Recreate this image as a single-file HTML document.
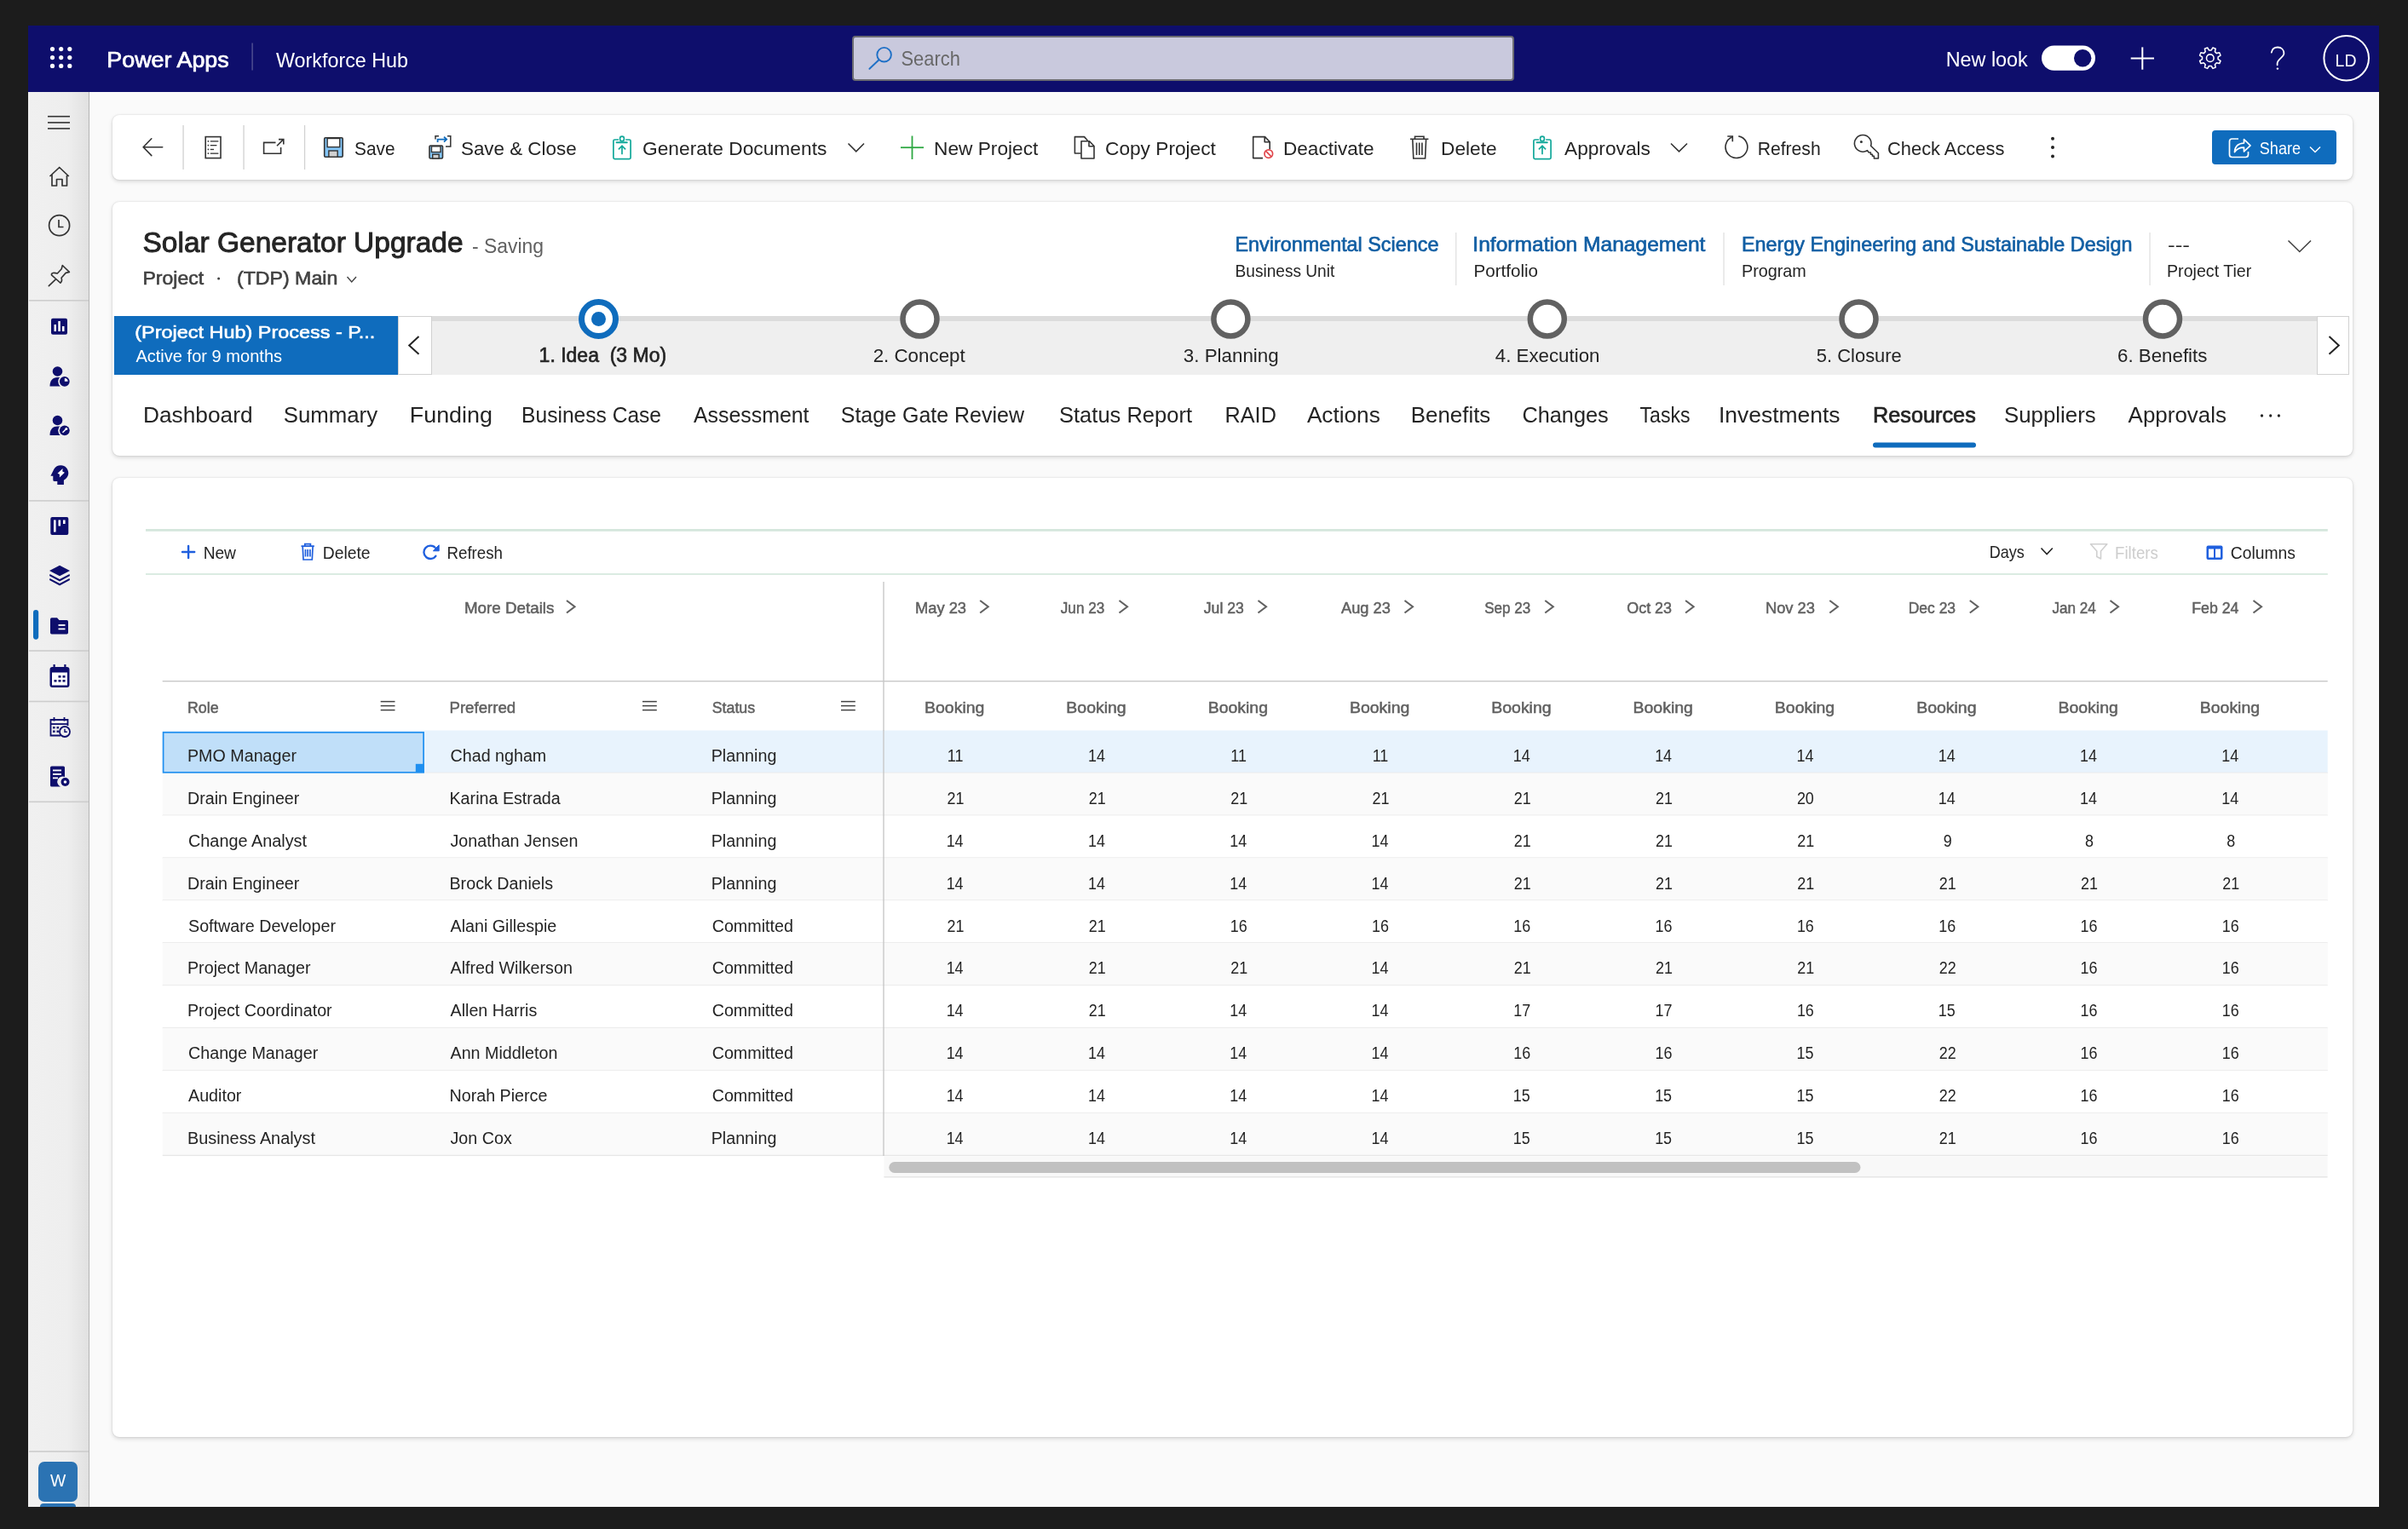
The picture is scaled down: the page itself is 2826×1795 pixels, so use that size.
<!DOCTYPE html>
<html><head><meta charset="utf-8"><title>Workforce Hub - Resources</title>
<style>
html,body{margin:0;padding:0;width:2826px;height:1795px;overflow:hidden;background:#1c1c1c;font-family:"Liberation Sans", sans-serif;}
#app{position:relative;width:2826px;height:1795px;}
svg.ov{position:absolute;left:0;top:0;will-change:transform;}
svg text{font-family:"Liberation Sans", sans-serif;white-space:pre;}
</style></head><body><div id="app">
<div style="position:absolute;left:33px;top:30px;width:2759px;height:78px;background:#0e0e6c"></div><div style="position:absolute;left:33px;top:108px;width:71px;height:1661px;background:linear-gradient(90deg,#f0f0f0 0%,#eeeeee 65%,#e1e1e1 100%);"></div><div style="position:absolute;left:103.8px;top:108px;width:1.4px;height:1661px;background:#b4b4b4"></div><div style="position:absolute;left:105px;top:108px;width:2687px;height:1661px;background:#fafafa"></div><div style="position:absolute;left:132px;top:135px;width:2629px;height:76px;background:#fff;border-radius:8px;box-shadow:0 0 2px rgba(0,0,0,0.14),0 2px 5px rgba(0,0,0,0.15);"></div><div style="position:absolute;left:132px;top:237px;width:2629px;height:298px;background:#fff;border-radius:8px;box-shadow:0 0 2px rgba(0,0,0,0.14),0 2px 5px rgba(0,0,0,0.15);"></div><div style="position:absolute;left:132px;top:561px;width:2629px;height:1126px;background:#fff;border-radius:8px;box-shadow:0 0 2px rgba(0,0,0,0.14),0 2px 5px rgba(0,0,0,0.15);"></div><div style="position:absolute;left:1000px;top:41.5px;width:777px;height:53px;background:#c9c9dd;border:2px solid #6c6c72;border-radius:4px;box-sizing:border-box"></div><div style="position:absolute;left:45.4px;top:1716px;width:45.6px;height:47px;background:#2b73b3;border-radius:7px"></div><div style="position:absolute;left:47px;top:1765px;width:42px;height:4px;background:#2b73b3;border-radius:4px 4px 0 0"></div><div style="position:absolute;left:2596px;top:153px;width:146px;height:40px;background:#0f6cbd;border-radius:4px"></div><div style="position:absolute;left:134px;top:371px;width:333px;height:69px;background:#0f6cbd"></div><div style="position:absolute;left:507px;top:371px;width:2212px;height:69px;background:#efefef"></div><div style="position:absolute;left:507px;top:371px;width:2212px;height:6px;background:#dcdcdc"></div><div style="position:absolute;left:467px;top:371px;width:40px;height:69px;background:#fff;border:1px solid #d1d1d1;box-sizing:border-box"></div><div style="position:absolute;left:2718.5px;top:371px;width:38.5px;height:69px;background:#fff;border:1px solid #d1d1d1;box-sizing:border-box"></div>
<svg class="ov" width="2826" height="1795" viewBox="0 0 2826 1795">
<circle cx="61.5" cy="57.6" r="2.6" fill="#fff"/><circle cx="61.5" cy="67.6" r="2.6" fill="#fff"/><circle cx="61.5" cy="77.4" r="2.6" fill="#fff"/><circle cx="71.7" cy="57.6" r="2.6" fill="#fff"/><circle cx="71.7" cy="67.6" r="2.6" fill="#fff"/><circle cx="71.7" cy="77.4" r="2.6" fill="#fff"/><circle cx="81.8" cy="57.6" r="2.6" fill="#fff"/><circle cx="81.8" cy="67.6" r="2.6" fill="#fff"/><circle cx="81.8" cy="77.4" r="2.6" fill="#fff"/><rect x="295.5" y="50.5" width="1.2" height="32" fill="#5d5d99"/><g stroke="#1f70c6" stroke-width="1.9" fill="none" stroke-linecap="round"><circle cx="1037.6" cy="64.2" r="8.3"/><line x1="1031.5" y1="70.3" x2="1020.4" y2="80.8"/></g><rect x="2396" y="53.5" width="63" height="29.2" rx="14.6" fill="#fff"/><circle cx="2444.2" cy="68.2" r="10.2" fill="#0e0e6c"/><g stroke="#fff" stroke-width="2" fill="none"><line x1="2514.3" y1="55.4" x2="2514.3" y2="81.7"/><line x1="2500.7" y1="68.5" x2="2528" y2="68.5"/></g><polygon points="2595.19,58.90 2596.95,56.00 2600.19,57.34 2599.39,60.64 2601.36,62.61 2604.66,61.81 2606.00,65.05 2603.10,66.81 2603.10,69.59 2606.00,71.35 2604.66,74.59 2601.36,73.79 2599.39,75.76 2600.19,79.06 2596.95,80.40 2595.19,77.50 2592.41,77.50 2590.65,80.40 2587.41,79.06 2588.21,75.76 2586.24,73.79 2582.94,74.59 2581.60,71.35 2584.50,69.59 2584.50,66.81 2581.60,65.05 2582.94,61.81 2586.24,62.61 2588.21,60.64 2587.41,57.34 2590.65,56.00 2592.41,58.90" fill="none" stroke="#fff" stroke-width="1.55" stroke-linejoin="round"/><circle cx="2593.8" cy="68.2" r="4.3" fill="none" stroke="#fff" stroke-width="1.55"/><path d="M2665.8 61.7 C2666.5 57.5 2669.5 55.5 2673.1 55.5 C2677.5 55.5 2680.4 58.5 2680.4 62.8 C2680.4 67 2672.6 69.5 2672.6 74.5 V76.3" fill="none" stroke="#fff" stroke-width="1.8" stroke-linecap="round"/><circle cx="2672.9" cy="80.6" r="1.2" fill="#fff"/><circle cx="2753.7" cy="68.2" r="26.3" fill="none" stroke="#fff" stroke-width="2"/><g stroke="#333" stroke-width="1.6"><line x1="56" y1="136.7" x2="82" y2="136.7"/><line x1="56" y1="143.9" x2="82" y2="143.9"/><line x1="56" y1="150.9" x2="82" y2="150.9"/></g><path d="M58.5 207 L69.7 196.5 L80.8 207 M61 204.8 V218 H66.5 V210.5 H73 V218 H78.5 V204.8" fill="none" stroke="#333" stroke-width="1.7" stroke-linejoin="round"/><circle cx="69.6" cy="264.7" r="12" fill="none" stroke="#333" stroke-width="1.7"/><path d="M69 258 V266.5 H74.5" fill="none" stroke="#333" stroke-width="1.7"/><path d="M65.7 327.5 L60.5 322.8 C60 320.5 63 319.8 67.3 321 L72.2 315.7 L73.3 311.5 L81.4 319.4 L77.2 320.4 L72 326.2 C73 328.5 72.3 330.8 70.9 332.2 Z M57.3 335.6 L65.4 327.8" fill="none" stroke="#333" stroke-width="1.6" stroke-linejoin="round" stroke-linecap="round"/><rect x="34" y="352.0" width="70" height="1.6" fill="#cdcdcd"/><rect x="34" y="587.1" width="70" height="1.6" fill="#cdcdcd"/><rect x="34" y="763.2" width="70" height="1.6" fill="#cdcdcd"/><rect x="34" y="822.7" width="70" height="1.6" fill="#cdcdcd"/><rect x="34" y="940.5" width="70" height="1.6" fill="#cdcdcd"/><rect x="34" y="1703.2" width="70" height="1.6" fill="#cdcdcd"/><rect x="60" y="373.7" width="19" height="19" rx="2" fill="#0e0e6c"/><g fill="#fff"><rect x="63.5" y="381" width="2.5" height="8"/><rect x="68.3" y="377" width="2.5" height="12"/><rect x="73" y="383" width="2.5" height="6"/></g><circle cx="67.5" cy="436" r="5.8" fill="#0e0e6c"/><path d="M58.5 453.5 C58.5 446.5 62 443 67.5 443 H71 C73 443 74.5 444 75 445 V453.5 Z" fill="#0e0e6c"/><circle cx="75.8" cy="447.8" r="7.6" fill="#efefef"/><circle cx="75.8" cy="447.8" r="5.9" fill="#0e0e6c"/><path d="M75.8 447.8 V444 A3.8 3.8 0 0 1 79.6 447.8 Z" fill="#fff"/><circle cx="67.5" cy="493.5" r="5.8" fill="#0e0e6c"/><path d="M58.5 511.0 C58.5 504.0 62 500.5 67.5 500.5 H71 C73 500.5 74.5 501.5 75 502.5 V511.0 Z" fill="#0e0e6c"/><circle cx="75.8" cy="505.3" r="7.6" fill="#efefef"/><circle cx="75.8" cy="505.3" r="5.9" fill="#0e0e6c"/><path d="M73.5 507.8 L77.3 504.0" stroke="#fff" stroke-width="1.5"/><circle cx="77.8" cy="503.4" r="1.5" fill="#fff"/><path d="M71.5 546.3 C76.5 546.3 80.3 550.5 80.3 555.5 C80.3 558.5 78.5 561.5 74.9 563.8 V569 H67.3 V565.1 H64 Q62.3 565.1 62.3 563.4 V558.8 H59.4 L63.5 550.5 C65 547.8 68 546.3 71.5 546.3 Z" fill="#0e0e6c"/><path d="M73.6 550 L67.5 555.7 L69.9 556.8 L69.9 560.4 L75.9 554.7 L73.3 553.6 Z" fill="#fff"/><rect x="59.3" y="607" width="21" height="21" rx="2" fill="#0e0e6c"/><g fill="#fff"><rect x="63" y="610.5" width="2.6" height="14"/><rect x="68.5" y="610.5" width="2.6" height="7"/><rect x="74" y="610.5" width="2.6" height="4.5"/></g><path d="M70 663.8 L82 670 L70 676.2 L58 670 Z" fill="#0e0e6c"/><path d="M58.5 674 L70 680 L81.5 674 L82 676 L70 682.5 L58 676 Z" fill="#0e0e6c"/><path d="M58.5 679 L70 685 L81.5 679 L82 681 L70 687.5 L58 681 Z" fill="#0e0e6c"/><rect x="39" y="716" width="6.2" height="34.7" rx="3.1" fill="#0f6cbd"/><path d="M59 727 Q59 725.3 60.7 725.3 H67 L69.5 728 H78.3 Q80 728 80 729.7 V742.7 Q80 744.4 78.3 744.4 H60.7 Q59 744.4 59 742.7 Z" fill="#0e0e6c"/><g fill="#fff"><rect x="68.5" y="733" width="8" height="1.8"/><rect x="68.5" y="737.5" width="8" height="1.8"/></g><rect x="58.5" y="783" width="23" height="24" rx="3" fill="#0e0e6c"/><rect x="61" y="789.5" width="18" height="15" fill="#fff"/><g fill="#0e0e6c"><rect x="63.5" y="798" width="3" height="2.6"/><rect x="68.5" y="798" width="3" height="2.6"/><rect x="73.5" y="793" width="3" height="2.6"/><rect x="73.5" y="798" width="3" height="2.6"/><rect x="68.5" y="793" width="3" height="2.6"/></g><rect x="62.5" y="780" width="2.2" height="5" fill="#0e0e6c"/><rect x="75.3" y="780" width="2.2" height="5" fill="#0e0e6c"/><g fill="none" stroke="#0e0e6c" stroke-width="1.8"><path d="M71 863.5 H59.5 V845 H79.5 V852"/><line x1="59.5" y1="850" x2="79.5" y2="850"/><line x1="63.5" y1="842" x2="63.5" y2="846.5"/><line x1="75.5" y1="842" x2="75.5" y2="846.5"/></g><g fill="#0e0e6c"><rect x="62" y="853" width="2.6" height="2.4"/><rect x="66.5" y="853" width="2.6" height="2.4"/><rect x="62" y="857.5" width="2.6" height="2.4"/><rect x="66.5" y="857.5" width="2.6" height="2.4"/></g><circle cx="76" cy="859" r="6" fill="#efefef" stroke="#0e0e6c" stroke-width="1.8"/><path d="M76 855.8 V859.3 H78.8" fill="none" stroke="#0e0e6c" stroke-width="1.4"/><path d="M59 901 Q59 899.4 60.6 899.4 H74.4 Q76 899.4 76 901 V912 A6 6 0 0 0 71 923.5 H60.6 Q59 923.5 59 921.9 Z" fill="#0e0e6c"/><g fill="#fff"><rect x="62" y="903.5" width="10" height="1.8"/><rect x="62" y="908" width="10" height="1.8"/><rect x="62" y="912.5" width="6" height="1.8"/></g><circle cx="76.5" cy="918" r="5" fill="#0e0e6c"/><circle cx="76.5" cy="918" r="1.8" fill="#fff"/><g fill="none" stroke="#333" stroke-width="1.6" stroke-linecap="round"><path d="M177.8 162.8 L168.2 172.8 L177.8 182.6 M168.5 172.8 H190.7"/></g><rect x="214.4" y="147" width="1.3" height="52" fill="#d1d1d1"/><rect x="285.4" y="147" width="1.3" height="52" fill="#d1d1d1"/><rect x="356.9" y="147" width="1.3" height="52" fill="#d1d1d1"/><rect x="241.2" y="160.6" width="17.8" height="25" fill="none" stroke="#333" stroke-width="1.6"/><g fill="#333"><rect x="243.6" y="165.0" width="1.6" height="1.6"/><rect x="246.8" y="165.20000000000002" width="9.6" height="1.3"/><rect x="243.6" y="169.79999999999998" width="1.6" height="1.6"/><rect x="246.8" y="170.0" width="7.6" height="1.3"/><rect x="243.6" y="174.6" width="1.6" height="1.6"/><rect x="246.8" y="174.8" width="4.2" height="1.3"/><rect x="243.6" y="179.29999999999998" width="1.6" height="1.6"/><rect x="246.8" y="179.5" width="9.6" height="1.3"/></g><g fill="none" stroke="#333" stroke-width="1.6"><path d="M323.5 167.4 H309.6 V180.2 H329.6 V173"/><path d="M325 171.2 L332.6 163.6 M327 163.6 H332.8 V169.4"/></g><rect x="380.7" y="161.7" width="21.5" height="22.5" rx="1.2" fill="#83c5f7" stroke="#333" stroke-width="1.6"/><rect x="384.14" y="162.5" width="14.620000000000001" height="10.125" fill="#fff" stroke="#333" stroke-width="1.4"/><rect x="385.86" y="177.0" width="10.32" height="7.2" fill="#d0d0d0" stroke="#333" stroke-width="1.4"/><rect x="504" y="171" width="15.5" height="15" rx="1.2" fill="#83c5f7" stroke="#333" stroke-width="1.6"/><rect x="506.48" y="171.8" width="10.540000000000001" height="6.75" fill="#fff" stroke="#333" stroke-width="1.4"/><rect x="507.72" y="181.2" width="7.4399999999999995" height="4.8" fill="#d0d0d0" stroke="#333" stroke-width="1.4"/><path d="M511 163.5 V159.8 H515 M525 159.8 H528.8 V172 H523" fill="none" stroke="#333" stroke-width="1.5"/><path d="M513.6 167 V163.6 H524 M521 160.6 L524.2 163.6 L521 166.6" fill="none" stroke="#0f6cbd" stroke-width="1.8"/><g transform="translate(0 0.0)" fill="none" stroke="#12a89a" stroke-width="1.7"><path d="M726 164 H721.4 Q719.9 164 719.9 165.5 V185.1 Q719.9 186.6 721.4 186.6 H738.6 Q740.1 186.6 740.1 185.1 V165.5 Q740.1 164 738.6 164 H734.2"/><rect x="727.6" y="160.1" width="4.8" height="5.6" rx="2.4"/><line x1="723.6" y1="167.3" x2="735.8" y2="167.3" stroke-width="1.9" stroke-linecap="round"/><path d="M730 181.3 V171.6 M725.9 175.3 L730 171.2 L734.1 175.3"/></g><g transform="translate(1080 0.0)" fill="none" stroke="#12a89a" stroke-width="1.7"><path d="M726 164 H721.4 Q719.9 164 719.9 165.5 V185.1 Q719.9 186.6 721.4 186.6 H738.6 Q740.1 186.6 740.1 185.1 V165.5 Q740.1 164 738.6 164 H734.2"/><rect x="727.6" y="160.1" width="4.8" height="5.6" rx="2.4"/><line x1="723.6" y1="167.3" x2="735.8" y2="167.3" stroke-width="1.9" stroke-linecap="round"/><path d="M730 181.3 V171.6 M725.9 175.3 L730 171.2 L734.1 175.3"/></g><path d="M995.5 168.5 L1004.75 177.8 L1014 168.5" fill="none" stroke="#333" stroke-width="1.6"/><path d="M1961 168.5 L1970.5 177.8 L1980 168.5" fill="none" stroke="#333" stroke-width="1.6"/><g stroke="#2ea843" stroke-width="1.8"><line x1="1070.5" y1="159.5" x2="1070.5" y2="187"/><line x1="1057" y1="173.2" x2="1084" y2="173.2"/></g><g fill="none" stroke="#333" stroke-width="1.6" stroke-linejoin="round"><path d="M1268.5 180 H1261.4 V160.6 H1272.5 L1276 164.5 V165.8"/><path d="M1269 165.8 H1278.5 L1284 171.5 V186 H1269 Z M1278 166 V171.8 H1284"/></g><g fill="none" stroke="#333" stroke-width="1.6" stroke-linejoin="round"><path d="M1482 185.6 H1470.7 V160.6 H1484.5 L1490.2 166.5 V175.5 M1484.2 160.8 V166.8 H1490"/></g><circle cx="1488.8" cy="180.6" r="4.8" fill="#fff" stroke="#e0474c" stroke-width="1.7"/><line x1="1485.6" y1="177.4" x2="1492" y2="183.8" stroke="#e0474c" stroke-width="1.7"/><g fill="none" stroke="#333" stroke-width="1.6"><path d="M1655 163.3 H1676.4 M1660.5 163.3 V160.2 H1671 V163.3 M1657.8 163.5 L1658.8 186 H1672.6 L1673.6 163.5"/><path d="M1662.5 167.5 V182 M1665.7 167.5 V182 M1668.9 167.5 V182"/></g><path d="M2032.9 160.7 A12.9 12.9 0 1 0 2040.3 159.9" fill="none" stroke="#333" stroke-width="1.6"/><path d="M2027.3 160 H2033.3 V166.3" fill="none" stroke="#333" stroke-width="1.6"/><path d="M2195.6 171.2 L2204.4 179.8 V186 H2199.4 V183.2 H2197.4 V181.2 H2195.4 V179 H2193.2 L2191.5 176.6 A9.8 9.8 0 1 1 2195.6 171.2 Z" fill="none" stroke="#333" stroke-width="1.6" stroke-linejoin="round"/><circle cx="2184.4" cy="166.5" r="1.5" fill="#333"/><circle cx="2409" cy="162.8" r="2" fill="#242424"/><circle cx="2409" cy="173" r="2" fill="#242424"/><circle cx="2409" cy="183.5" r="2" fill="#242424"/><g fill="none" stroke="#fff" stroke-width="1.7" stroke-linejoin="round"><path d="M2627 163 H2619.5 Q2616.5 163 2616.5 166 V181.5 Q2616.5 184.5 2619.5 184.5 H2635.5 Q2638.5 184.5 2638.5 181.5 V178"/><path d="M2622.5 178.5 Q2623 168.5 2633.5 168 V163.5 L2641 170.8 L2633.5 177.8 V173.2 Q2626.5 173 2622.5 178.5 Z"/></g><path d="M2711 172.5 L2717.0 178.5 L2723 172.5" fill="none" stroke="#fff" stroke-width="1.5"/><circle cx="256.6" cy="327" r="1.5" fill="#424242"/><path d="M407.5 325 L412.75 331 L418 325" fill="none" stroke="#424242" stroke-width="1.4"/><rect x="1708.1000000000001" y="273" width="1.3" height="62" fill="#e0e0e0"/><rect x="2022.4" y="273" width="1.3" height="62" fill="#e0e0e0"/><rect x="2522.4" y="273" width="1.3" height="62" fill="#e0e0e0"/><path d="M2685.5 282.5 L2698.75 295.5 L2712 282.5" fill="none" stroke="#424242" stroke-width="1.6"/><path d="M491.5 395 L480.2 405.5 L491.5 415.8" fill="none" stroke="#242424" stroke-width="2"/><path d="M2733.5 395 L2744.8 405.5 L2733.5 415.8" fill="none" stroke="#242424" stroke-width="2"/><circle cx="702.5" cy="374.5" r="20" fill="#fff" stroke="#0f6cbd" stroke-width="7"/><circle cx="702.5" cy="374.5" r="8.5" fill="#0f6cbd"/><circle cx="1079.5" cy="374.5" r="20" fill="#fff" stroke="#616161" stroke-width="6.5"/><circle cx="1444.4" cy="374.5" r="20" fill="#fff" stroke="#616161" stroke-width="6.5"/><circle cx="1815.8" cy="374.5" r="20" fill="#fff" stroke="#616161" stroke-width="6.5"/><circle cx="2181.5" cy="374.5" r="20" fill="#fff" stroke="#616161" stroke-width="6.5"/><circle cx="2538" cy="374.5" r="20" fill="#fff" stroke="#616161" stroke-width="6.5"/><circle cx="2654.5" cy="488" r="1.65" fill="#242424"/><circle cx="2664.7" cy="488" r="1.65" fill="#242424"/><circle cx="2674.4" cy="488" r="1.65" fill="#242424"/><rect x="2198" y="519.6" width="121" height="6" rx="3" fill="#0f6cbd"/><rect x="171" y="621" width="2560.8" height="2.8" fill="#d5e7dd"/><rect x="171" y="673" width="2560.8" height="2" fill="#dbebe2"/><g stroke="#1f5fde" stroke-width="2.4" stroke-linecap="round"><line x1="221.1" y1="641" x2="221.1" y2="655"/><line x1="214" y1="648" x2="228.2" y2="648"/></g><g fill="none" stroke="#1f5fde" stroke-width="1.7"><path d="M353.5 641.2 H368.8 M357.8 641 V638.6 H364.4 V641 M355.2 641.5 L356 657 H366.3 L367.1 641.5"/><path d="M358.5 645 V653.5 M361.2 645 V653.5 M363.9 645 V653.5"/></g><path d="M511.4 652.8 A7.7 7.7 0 1 1 510.6 642.8" fill="none" stroke="#1f5fde" stroke-width="2.3" stroke-linecap="round"/><path d="M515.2 639.8 V646.8 H508.4 Z" fill="#1f5fde" stroke="#1f5fde" stroke-width="1" stroke-linejoin="round"/><path d="M2395.5 643.5 L2402.15 650.5 L2408.8 643.5" fill="none" stroke="#242424" stroke-width="1.6"/><path d="M2453.5 638.8 H2472.8 L2465.5 647 V656 L2460.8 653.5 V647 Z" fill="none" stroke="#d0d0d0" stroke-width="1.6" stroke-linejoin="round"/><rect x="2589.5" y="640.5" width="19" height="16.5" rx="2" fill="#1f5fde"/><rect x="2592" y="644.5" width="6" height="10" fill="#fff"/><rect x="2600" y="644.5" width="6" height="10" fill="#fff"/><path d="M665 705 L674.5 712.25 L665 719.5" fill="none" stroke="#616161" stroke-width="2.1"/><rect x="1036.3" y="683" width="1.4" height="674" fill="#c8c8c8"/><path d="M1150.2 705 L1159.7 712.25 L1150.2 719.5" fill="none" stroke="#616161" stroke-width="2.1"/><path d="M1313.5 705 L1323 712.25 L1313.5 719.5" fill="none" stroke="#616161" stroke-width="2.1"/><path d="M1476.5 705 L1486 712.25 L1476.5 719.5" fill="none" stroke="#616161" stroke-width="2.1"/><path d="M1648.5 705 L1658 712.25 L1648.5 719.5" fill="none" stroke="#616161" stroke-width="2.1"/><path d="M1813.3 705 L1822.8 712.25 L1813.3 719.5" fill="none" stroke="#616161" stroke-width="2.1"/><path d="M1978.1 705 L1987.6 712.25 L1978.1 719.5" fill="none" stroke="#616161" stroke-width="2.1"/><path d="M2147.3 705 L2156.8 712.25 L2147.3 719.5" fill="none" stroke="#616161" stroke-width="2.1"/><path d="M2311.8 705 L2321.3 712.25 L2311.8 719.5" fill="none" stroke="#616161" stroke-width="2.1"/><path d="M2476.5 705 L2486 712.25 L2476.5 719.5" fill="none" stroke="#616161" stroke-width="2.1"/><path d="M2644.5 705 L2654 712.25 L2644.5 719.5" fill="none" stroke="#616161" stroke-width="2.1"/><rect x="190.7" y="799" width="2541" height="1.4" fill="#c8c8c8"/><g stroke="#424242" stroke-width="1.5"><line x1="446.7" y1="823.6" x2="463.5" y2="823.6"/><line x1="446.7" y1="828.6" x2="463.5" y2="828.6"/><line x1="446.7" y1="833.6" x2="463.5" y2="833.6"/></g><g stroke="#424242" stroke-width="1.5"><line x1="754" y1="823.6" x2="770.8" y2="823.6"/><line x1="754" y1="828.6" x2="770.8" y2="828.6"/><line x1="754" y1="833.6" x2="770.8" y2="833.6"/></g><g stroke="#424242" stroke-width="1.5"><line x1="987" y1="823.6" x2="1003.8" y2="823.6"/><line x1="987" y1="828.6" x2="1003.8" y2="828.6"/><line x1="987" y1="833.6" x2="1003.8" y2="833.6"/></g><rect x="190.7" y="857.5" width="2541" height="49.9" fill="#e8f3fd"/><rect x="190.7" y="906.7" width="2541" height="1.3" fill="#e6e6e6"/><rect x="190.7" y="907.4" width="2541" height="49.9" fill="#fafafa"/><rect x="190.7" y="956.6" width="2541" height="1.3" fill="#e6e6e6"/><rect x="190.7" y="957.3" width="2541" height="49.9" fill="#ffffff"/><rect x="190.7" y="1006.5" width="2541" height="1.3" fill="#e6e6e6"/><rect x="190.7" y="1007.2" width="2541" height="49.9" fill="#fafafa"/><rect x="190.7" y="1056.4" width="2541" height="1.3" fill="#e6e6e6"/><rect x="190.7" y="1057.1" width="2541" height="49.9" fill="#ffffff"/><rect x="190.7" y="1106.3" width="2541" height="1.3" fill="#e6e6e6"/><rect x="190.7" y="1107.0" width="2541" height="49.9" fill="#fafafa"/><rect x="190.7" y="1156.2" width="2541" height="1.3" fill="#e6e6e6"/><rect x="190.7" y="1156.9" width="2541" height="49.9" fill="#ffffff"/><rect x="190.7" y="1206.1000000000001" width="2541" height="1.3" fill="#e6e6e6"/><rect x="190.7" y="1206.8" width="2541" height="49.9" fill="#fafafa"/><rect x="190.7" y="1256.0" width="2541" height="1.3" fill="#e6e6e6"/><rect x="190.7" y="1256.7" width="2541" height="49.9" fill="#ffffff"/><rect x="190.7" y="1305.9" width="2541" height="1.3" fill="#e6e6e6"/><rect x="190.7" y="1306.6" width="2541" height="49.9" fill="#fafafa"/><rect x="190.7" y="1355.8" width="2541" height="1.3" fill="#e6e6e6"/><rect x="1036.3" y="857" width="1.4" height="500" fill="#c8c8c8"/><rect x="191.6" y="859.8" width="305.5" height="47" fill="#c0dff9" stroke="#1f8ff0" stroke-width="1.7"/><rect x="487.8" y="896.8" width="10" height="10.2" fill="#1f8ff0"/><rect x="1037.5" y="1357.5" width="1694" height="24.5" fill="#f8f8f8"/><rect x="1037.5" y="1381" width="1694" height="1.5" fill="#e6e6e6"/><rect x="1043.3" y="1364" width="1140.2" height="13" rx="6.5" fill="#c1c1c1"/>
<text x="125.37" y="79" font-size="26.2" fill="#fff" stroke="#fff" stroke-width="0.73" textLength="143.33" lengthAdjust="spacingAndGlyphs">Power Apps</text><text x="324.00" y="78.5" font-size="24" fill="#fff" textLength="155.04" lengthAdjust="spacingAndGlyphs">Workforce Hub</text><text x="1057.49" y="77.3" font-size="24" fill="#686868" textLength="69.34" lengthAdjust="spacingAndGlyphs">Search</text><text x="2283.71" y="77.9" font-size="23.5" fill="#fff" textLength="96.05" lengthAdjust="spacingAndGlyphs">New look</text><text x="2740.62" y="77.9" font-size="21" fill="#fff" textLength="24.98" lengthAdjust="spacingAndGlyphs">LD</text><text x="59.00" y="1744.7" font-size="20" fill="#fff" textLength="18.28" lengthAdjust="spacingAndGlyphs">W</text><text x="416.08" y="182.2" font-size="22.7" fill="#242424" textLength="47.49" lengthAdjust="spacingAndGlyphs">Save</text><text x="541.01" y="182.2" font-size="22.7" fill="#242424" textLength="135.60" lengthAdjust="spacingAndGlyphs">Save &amp; Close</text><text x="754.00" y="182.2" font-size="22.7" fill="#242424" textLength="216.35" lengthAdjust="spacingAndGlyphs">Generate Documents</text><text x="1096.00" y="182.2" font-size="22.7" fill="#242424">New Project</text><text x="1297.00" y="182.2" font-size="22.7" fill="#242424">Copy Project</text><text x="1506.01" y="182.2" font-size="22.7" fill="#242424" textLength="106.61" lengthAdjust="spacingAndGlyphs">Deactivate</text><text x="1691.00" y="182.2" font-size="22.7" fill="#242424">Delete</text><text x="1836.00" y="182.2" font-size="22.7" fill="#242424">Approvals</text><text x="2062.67" y="182.2" font-size="22.7" fill="#242424" textLength="74.01" lengthAdjust="spacingAndGlyphs">Refresh</text><text x="2215.04" y="182.2" font-size="22.7" fill="#242424" textLength="137.28" lengthAdjust="spacingAndGlyphs">Check Access</text><text x="2651.80" y="181.3" font-size="19.8" fill="#fff" textLength="48.20" lengthAdjust="spacingAndGlyphs">Share</text><text x="167.50" y="296.1" font-size="33.4" fill="#242424" stroke="#242424" stroke-width="0.94" textLength="376.08" lengthAdjust="spacingAndGlyphs">Solar Generator Upgrade</text><text x="554.03" y="296.8" font-size="23.5" fill="#616161" textLength="84.02" lengthAdjust="spacingAndGlyphs">- Saving</text><text x="167.47" y="334.1" font-size="22.4" fill="#424242" stroke="#424242" stroke-width="0.63" textLength="71.63" lengthAdjust="spacingAndGlyphs">Project</text><text x="277.97" y="334.1" font-size="22.4" fill="#424242" stroke="#424242" stroke-width="0.63" textLength="118.34" lengthAdjust="spacingAndGlyphs">(TDP) Main</text><text x="1449.49" y="295" font-size="23.2" fill="#115ea3" stroke="#115ea3" stroke-width="0.65" textLength="238.91" lengthAdjust="spacingAndGlyphs">Environmental Science</text><text x="1449.53" y="324.7" font-size="19.8" fill="#242424" textLength="116.78" lengthAdjust="spacingAndGlyphs">Business Unit</text><text x="1728.38" y="295" font-size="23.2" fill="#115ea3" stroke="#115ea3" stroke-width="0.65" textLength="273.03" lengthAdjust="spacingAndGlyphs">Information Management</text><text x="1729.46" y="324.7" font-size="19.8" fill="#242424" textLength="75.54" lengthAdjust="spacingAndGlyphs">Portfolio</text><text x="2043.99" y="295" font-size="23.2" fill="#115ea3" stroke="#115ea3" stroke-width="0.65" textLength="458.51" lengthAdjust="spacingAndGlyphs">Energy Engineering and Sustainable Design</text><text x="2044.00" y="324.7" font-size="19.8" fill="#242424">Program</text><text x="2544.00" y="295" font-size="21" fill="#242424" textLength="25.99" lengthAdjust="spacingAndGlyphs">---</text><text x="2543.01" y="325" font-size="19.8" fill="#242424" textLength="99.28" lengthAdjust="spacingAndGlyphs">Project Tier</text><text x="158.26" y="396.5" font-size="20.5" fill="#fff" stroke="#fff" stroke-width="0.57" textLength="282.08" lengthAdjust="spacingAndGlyphs">(Project Hub) Process - P...</text><text x="159.40" y="424.8" font-size="20.2" fill="#fff" textLength="171.69" lengthAdjust="spacingAndGlyphs">Active for 9 months</text><text x="632.60" y="425" font-size="23" fill="#242424" stroke="#242424" stroke-width="0.64">1. Idea  (3 Mo)</text><text x="1024.67" y="425" font-size="22.8" fill="#242424" textLength="108.03" lengthAdjust="spacingAndGlyphs">2. Concept</text><text x="1388.80" y="425" font-size="22.8" fill="#242424" textLength="111.87" lengthAdjust="spacingAndGlyphs">3. Planning</text><text x="1754.80" y="425" font-size="22.8" fill="#242424" textLength="122.66" lengthAdjust="spacingAndGlyphs">4. Execution</text><text x="2131.85" y="425" font-size="22.8" fill="#242424" textLength="99.95" lengthAdjust="spacingAndGlyphs">5. Closure</text><text x="2485.02" y="425" font-size="22.8" fill="#242424" textLength="105.37" lengthAdjust="spacingAndGlyphs">6. Benefits</text><text x="167.99" y="495.5" font-size="26.2" fill="#242424" textLength="128.58" lengthAdjust="spacingAndGlyphs">Dashboard</text><text x="332.71" y="495.5" font-size="26.2" fill="#242424" textLength="110.39" lengthAdjust="spacingAndGlyphs">Summary</text><text x="480.74" y="495.5" font-size="26.2" fill="#242424" textLength="97.26" lengthAdjust="spacingAndGlyphs">Funding</text><text x="612.12" y="495.5" font-size="26.2" fill="#242424" textLength="163.91" lengthAdjust="spacingAndGlyphs">Business Case</text><text x="814.00" y="495.5" font-size="26.2" fill="#242424" textLength="135.51" lengthAdjust="spacingAndGlyphs">Assessment</text><text x="986.75" y="495.5" font-size="26.2" fill="#242424" textLength="215.17" lengthAdjust="spacingAndGlyphs">Stage Gate Review</text><text x="1243.03" y="495.5" font-size="26.2" fill="#242424" textLength="155.97" lengthAdjust="spacingAndGlyphs">Status Report</text><text x="1437.57" y="495.5" font-size="26.2" fill="#242424" textLength="60.31" lengthAdjust="spacingAndGlyphs">RAID</text><text x="1533.90" y="495.5" font-size="26.2" fill="#242424">Actions</text><text x="1655.82" y="495.5" font-size="26.2" fill="#242424" textLength="93.47" lengthAdjust="spacingAndGlyphs">Benefits</text><text x="1786.43" y="495.5" font-size="26.2" fill="#242424" textLength="101.36" lengthAdjust="spacingAndGlyphs">Changes</text><text x="1924.60" y="495.5" font-size="26.2" fill="#242424" textLength="58.88" lengthAdjust="spacingAndGlyphs">Tasks</text><text x="2016.98" y="495.5" font-size="26.2" fill="#242424" textLength="142.62" lengthAdjust="spacingAndGlyphs">Investments</text><text x="2198.07" y="495.5" font-size="26.2" fill="#242424" stroke="#242424" stroke-width="0.73" textLength="120.72" lengthAdjust="spacingAndGlyphs">Resources</text><text x="2352.01" y="495.5" font-size="26.2" fill="#242424" textLength="107.68" lengthAdjust="spacingAndGlyphs">Suppliers</text><text x="2497.60" y="495.5" font-size="26.2" fill="#242424" textLength="115.39" lengthAdjust="spacingAndGlyphs">Approvals</text><text x="238.64" y="656" font-size="20" fill="#242424" textLength="38.32" lengthAdjust="spacingAndGlyphs">New</text><text x="378.73" y="656" font-size="20" fill="#242424" textLength="55.89" lengthAdjust="spacingAndGlyphs">Delete</text><text x="524.46" y="656" font-size="20" fill="#242424" textLength="65.59" lengthAdjust="spacingAndGlyphs">Refresh</text><text x="2334.79" y="655.2" font-size="19.8" fill="#242424" textLength="41.11" lengthAdjust="spacingAndGlyphs">Days</text><text x="2482.06" y="656.4" font-size="19.8" fill="#cdcdcd" textLength="50.84" lengthAdjust="spacingAndGlyphs">Filters</text><text x="2617.72" y="656" font-size="19.8" fill="#242424" textLength="76.17" lengthAdjust="spacingAndGlyphs">Columns</text><text x="544.97" y="719.5" font-size="18.2" fill="#616161" stroke="#616161" stroke-width="0.51" textLength="105.43" lengthAdjust="spacingAndGlyphs">More Details</text><text x="1073.96" y="719.5" font-size="17.6" fill="#616161" stroke="#616161" stroke-width="0.49" textLength="60.12" lengthAdjust="spacingAndGlyphs">May 23</text><text x="1244.80" y="719.5" font-size="17.6" fill="#616161" stroke="#616161" stroke-width="0.49" textLength="51.49" lengthAdjust="spacingAndGlyphs">Jun 23</text><text x="1412.80" y="719.5" font-size="17.6" fill="#616161" stroke="#616161" stroke-width="0.49">Jul 23</text><text x="1574.00" y="719.5" font-size="17.6" fill="#616161" stroke="#616161" stroke-width="0.49" textLength="57.78" lengthAdjust="spacingAndGlyphs">Aug 23</text><text x="1742.20" y="719.5" font-size="17.6" fill="#616161" stroke="#616161" stroke-width="0.49" textLength="54.09" lengthAdjust="spacingAndGlyphs">Sep 23</text><text x="1909.30" y="719.5" font-size="17.6" fill="#616161" stroke="#616161" stroke-width="0.49" textLength="52.68" lengthAdjust="spacingAndGlyphs">Oct 23</text><text x="2071.96" y="719.5" font-size="17.6" fill="#616161" stroke="#616161" stroke-width="0.49" textLength="58.02" lengthAdjust="spacingAndGlyphs">Nov 23</text><text x="2239.71" y="719.5" font-size="17.6" fill="#616161" stroke="#616161" stroke-width="0.49" textLength="55.38" lengthAdjust="spacingAndGlyphs">Dec 23</text><text x="2408.50" y="719.5" font-size="17.6" fill="#616161" stroke="#616161" stroke-width="0.49" textLength="51.29" lengthAdjust="spacingAndGlyphs">Jan 24</text><text x="2572.29" y="719.5" font-size="17.6" fill="#616161" stroke="#616161" stroke-width="0.49" textLength="55.19" lengthAdjust="spacingAndGlyphs">Feb 24</text><text x="219.93" y="837.3" font-size="18.3" fill="#616161" stroke="#616161" stroke-width="0.51" textLength="36.64" lengthAdjust="spacingAndGlyphs">Role</text><text x="527.48" y="837.3" font-size="18.3" fill="#616161" stroke="#616161" stroke-width="0.51" textLength="77.71" lengthAdjust="spacingAndGlyphs">Preferred</text><text x="835.70" y="837.3" font-size="18.3" fill="#616161" stroke="#616161" stroke-width="0.51" textLength="50.44" lengthAdjust="spacingAndGlyphs">Status</text><text x="1085.09" y="837.3" font-size="18.3" fill="#616161" stroke="#616161" stroke-width="0.51" textLength="70.31" lengthAdjust="spacingAndGlyphs">Booking</text><text x="1251.39" y="837.3" font-size="18.3" fill="#616161" stroke="#616161" stroke-width="0.51" textLength="70.31" lengthAdjust="spacingAndGlyphs">Booking</text><text x="1417.69" y="837.3" font-size="18.3" fill="#616161" stroke="#616161" stroke-width="0.51" textLength="70.31" lengthAdjust="spacingAndGlyphs">Booking</text><text x="1583.99" y="837.3" font-size="18.3" fill="#616161" stroke="#616161" stroke-width="0.51" textLength="70.31" lengthAdjust="spacingAndGlyphs">Booking</text><text x="1750.29" y="837.3" font-size="18.3" fill="#616161" stroke="#616161" stroke-width="0.51" textLength="70.31" lengthAdjust="spacingAndGlyphs">Booking</text><text x="1916.59" y="837.3" font-size="18.3" fill="#616161" stroke="#616161" stroke-width="0.51" textLength="70.31" lengthAdjust="spacingAndGlyphs">Booking</text><text x="2082.89" y="837.3" font-size="18.3" fill="#616161" stroke="#616161" stroke-width="0.51" textLength="70.31" lengthAdjust="spacingAndGlyphs">Booking</text><text x="2249.19" y="837.3" font-size="18.3" fill="#616161" stroke="#616161" stroke-width="0.51" textLength="70.31" lengthAdjust="spacingAndGlyphs">Booking</text><text x="2415.49" y="837.3" font-size="18.3" fill="#616161" stroke="#616161" stroke-width="0.51" textLength="70.31" lengthAdjust="spacingAndGlyphs">Booking</text><text x="2581.79" y="837.3" font-size="18.3" fill="#616161" stroke="#616161" stroke-width="0.51" textLength="70.31" lengthAdjust="spacingAndGlyphs">Booking</text><text x="219.99" y="893.9" font-size="19.5" fill="#242424" textLength="128.07" lengthAdjust="spacingAndGlyphs">PMO Manager</text><text x="528.50" y="893.9" font-size="19.5" fill="#242424" textLength="112.78" lengthAdjust="spacingAndGlyphs">Chad ngham</text><text x="834.69" y="893.9" font-size="19.5" fill="#242424" textLength="76.65" lengthAdjust="spacingAndGlyphs">Planning</text><text x="1111.77" y="893.9" font-size="19.5" fill="#242424" textLength="18.62" lengthAdjust="spacingAndGlyphs">11</text><text x="1276.94" y="893.9" font-size="19.5" fill="#242424" textLength="19.95" lengthAdjust="spacingAndGlyphs">14</text><text x="1444.37" y="893.9" font-size="19.5" fill="#242424" textLength="18.62" lengthAdjust="spacingAndGlyphs">11</text><text x="1610.67" y="893.9" font-size="19.5" fill="#242424" textLength="18.62" lengthAdjust="spacingAndGlyphs">11</text><text x="1775.84" y="893.9" font-size="19.5" fill="#242424" textLength="19.95" lengthAdjust="spacingAndGlyphs">14</text><text x="1942.14" y="893.9" font-size="19.5" fill="#242424" textLength="19.95" lengthAdjust="spacingAndGlyphs">14</text><text x="2108.44" y="893.9" font-size="19.5" fill="#242424" textLength="19.95" lengthAdjust="spacingAndGlyphs">14</text><text x="2274.74" y="893.9" font-size="19.5" fill="#242424" textLength="19.95" lengthAdjust="spacingAndGlyphs">14</text><text x="2441.04" y="893.9" font-size="19.5" fill="#242424" textLength="19.95" lengthAdjust="spacingAndGlyphs">14</text><text x="2607.34" y="893.9" font-size="19.5" fill="#242424" textLength="19.95" lengthAdjust="spacingAndGlyphs">14</text><text x="219.99" y="943.8" font-size="19.5" fill="#242424" textLength="131.37" lengthAdjust="spacingAndGlyphs">Drain Engineer</text><text x="527.49" y="943.8" font-size="19.5" fill="#242424" textLength="130.28" lengthAdjust="spacingAndGlyphs">Karina Estrada</text><text x="834.69" y="943.8" font-size="19.5" fill="#242424" textLength="76.65" lengthAdjust="spacingAndGlyphs">Planning</text><text x="1111.56" y="943.8" font-size="19.5" fill="#242424" textLength="19.95" lengthAdjust="spacingAndGlyphs">21</text><text x="1277.86" y="943.8" font-size="19.5" fill="#242424" textLength="19.95" lengthAdjust="spacingAndGlyphs">21</text><text x="1444.16" y="943.8" font-size="19.5" fill="#242424" textLength="19.95" lengthAdjust="spacingAndGlyphs">21</text><text x="1610.46" y="943.8" font-size="19.5" fill="#242424" textLength="19.95" lengthAdjust="spacingAndGlyphs">21</text><text x="1776.76" y="943.8" font-size="19.5" fill="#242424" textLength="19.95" lengthAdjust="spacingAndGlyphs">21</text><text x="1943.06" y="943.8" font-size="19.5" fill="#242424" textLength="19.95" lengthAdjust="spacingAndGlyphs">21</text><text x="2108.90" y="943.8" font-size="19.5" fill="#242424" textLength="19.95" lengthAdjust="spacingAndGlyphs">20</text><text x="2274.74" y="943.8" font-size="19.5" fill="#242424" textLength="19.95" lengthAdjust="spacingAndGlyphs">14</text><text x="2441.04" y="943.8" font-size="19.5" fill="#242424" textLength="19.95" lengthAdjust="spacingAndGlyphs">14</text><text x="2607.34" y="943.8" font-size="19.5" fill="#242424" textLength="19.95" lengthAdjust="spacingAndGlyphs">14</text><text x="221.00" y="993.6999999999999" font-size="19.5" fill="#242424" textLength="139.05" lengthAdjust="spacingAndGlyphs">Change Analyst</text><text x="528.50" y="993.6999999999999" font-size="19.5" fill="#242424" textLength="150.02" lengthAdjust="spacingAndGlyphs">Jonathan Jensen</text><text x="834.69" y="993.6999999999999" font-size="19.5" fill="#242424" textLength="76.65" lengthAdjust="spacingAndGlyphs">Planning</text><text x="1110.64" y="993.6999999999999" font-size="19.5" fill="#242424" textLength="19.95" lengthAdjust="spacingAndGlyphs">14</text><text x="1276.94" y="993.6999999999999" font-size="19.5" fill="#242424" textLength="19.95" lengthAdjust="spacingAndGlyphs">14</text><text x="1443.24" y="993.6999999999999" font-size="19.5" fill="#242424" textLength="19.95" lengthAdjust="spacingAndGlyphs">14</text><text x="1609.54" y="993.6999999999999" font-size="19.5" fill="#242424" textLength="19.95" lengthAdjust="spacingAndGlyphs">14</text><text x="1776.76" y="993.6999999999999" font-size="19.5" fill="#242424" textLength="19.95" lengthAdjust="spacingAndGlyphs">21</text><text x="1943.06" y="993.6999999999999" font-size="19.5" fill="#242424" textLength="19.95" lengthAdjust="spacingAndGlyphs">21</text><text x="2109.36" y="993.6999999999999" font-size="19.5" fill="#242424" textLength="19.95" lengthAdjust="spacingAndGlyphs">21</text><text x="2280.65" y="993.6999999999999" font-size="19.5" fill="#242424" textLength="9.98" lengthAdjust="spacingAndGlyphs">9</text><text x="2446.95" y="993.6999999999999" font-size="19.5" fill="#242424" textLength="9.98" lengthAdjust="spacingAndGlyphs">8</text><text x="2613.25" y="993.6999999999999" font-size="19.5" fill="#242424" textLength="9.98" lengthAdjust="spacingAndGlyphs">8</text><text x="219.99" y="1043.6" font-size="19.5" fill="#242424" textLength="131.37" lengthAdjust="spacingAndGlyphs">Drain Engineer</text><text x="527.49" y="1043.6" font-size="19.5" fill="#242424" textLength="121.50" lengthAdjust="spacingAndGlyphs">Brock Daniels</text><text x="834.69" y="1043.6" font-size="19.5" fill="#242424" textLength="76.65" lengthAdjust="spacingAndGlyphs">Planning</text><text x="1110.64" y="1043.6" font-size="19.5" fill="#242424" textLength="19.95" lengthAdjust="spacingAndGlyphs">14</text><text x="1276.94" y="1043.6" font-size="19.5" fill="#242424" textLength="19.95" lengthAdjust="spacingAndGlyphs">14</text><text x="1443.24" y="1043.6" font-size="19.5" fill="#242424" textLength="19.95" lengthAdjust="spacingAndGlyphs">14</text><text x="1609.54" y="1043.6" font-size="19.5" fill="#242424" textLength="19.95" lengthAdjust="spacingAndGlyphs">14</text><text x="1776.76" y="1043.6" font-size="19.5" fill="#242424" textLength="19.95" lengthAdjust="spacingAndGlyphs">21</text><text x="1943.06" y="1043.6" font-size="19.5" fill="#242424" textLength="19.95" lengthAdjust="spacingAndGlyphs">21</text><text x="2109.36" y="1043.6" font-size="19.5" fill="#242424" textLength="19.95" lengthAdjust="spacingAndGlyphs">21</text><text x="2275.66" y="1043.6" font-size="19.5" fill="#242424" textLength="19.95" lengthAdjust="spacingAndGlyphs">21</text><text x="2441.96" y="1043.6" font-size="19.5" fill="#242424" textLength="19.95" lengthAdjust="spacingAndGlyphs">21</text><text x="2608.26" y="1043.6" font-size="19.5" fill="#242424" textLength="19.95" lengthAdjust="spacingAndGlyphs">21</text><text x="221.00" y="1093.5" font-size="19.5" fill="#242424" textLength="172.97" lengthAdjust="spacingAndGlyphs">Software Developer</text><text x="528.50" y="1093.5" font-size="19.5" fill="#242424" textLength="124.80" lengthAdjust="spacingAndGlyphs">Alani Gillespie</text><text x="835.70" y="1093.5" font-size="19.5" fill="#242424" textLength="95.21" lengthAdjust="spacingAndGlyphs">Committed</text><text x="1111.56" y="1093.5" font-size="19.5" fill="#242424" textLength="19.95" lengthAdjust="spacingAndGlyphs">21</text><text x="1277.86" y="1093.5" font-size="19.5" fill="#242424" textLength="19.95" lengthAdjust="spacingAndGlyphs">21</text><text x="1443.70" y="1093.5" font-size="19.5" fill="#242424" textLength="19.95" lengthAdjust="spacingAndGlyphs">16</text><text x="1610.00" y="1093.5" font-size="19.5" fill="#242424" textLength="19.95" lengthAdjust="spacingAndGlyphs">16</text><text x="1776.30" y="1093.5" font-size="19.5" fill="#242424" textLength="19.95" lengthAdjust="spacingAndGlyphs">16</text><text x="1942.60" y="1093.5" font-size="19.5" fill="#242424" textLength="19.95" lengthAdjust="spacingAndGlyphs">16</text><text x="2108.90" y="1093.5" font-size="19.5" fill="#242424" textLength="19.95" lengthAdjust="spacingAndGlyphs">16</text><text x="2275.20" y="1093.5" font-size="19.5" fill="#242424" textLength="19.95" lengthAdjust="spacingAndGlyphs">16</text><text x="2441.50" y="1093.5" font-size="19.5" fill="#242424" textLength="19.95" lengthAdjust="spacingAndGlyphs">16</text><text x="2607.80" y="1093.5" font-size="19.5" fill="#242424" textLength="19.95" lengthAdjust="spacingAndGlyphs">16</text><text x="219.99" y="1143.4" font-size="19.5" fill="#242424" textLength="144.50" lengthAdjust="spacingAndGlyphs">Project Manager</text><text x="528.50" y="1143.4" font-size="19.5" fill="#242424" textLength="143.38" lengthAdjust="spacingAndGlyphs">Alfred Wilkerson</text><text x="835.70" y="1143.4" font-size="19.5" fill="#242424" textLength="95.21" lengthAdjust="spacingAndGlyphs">Committed</text><text x="1110.64" y="1143.4" font-size="19.5" fill="#242424" textLength="19.95" lengthAdjust="spacingAndGlyphs">14</text><text x="1277.86" y="1143.4" font-size="19.5" fill="#242424" textLength="19.95" lengthAdjust="spacingAndGlyphs">21</text><text x="1444.16" y="1143.4" font-size="19.5" fill="#242424" textLength="19.95" lengthAdjust="spacingAndGlyphs">21</text><text x="1609.54" y="1143.4" font-size="19.5" fill="#242424" textLength="19.95" lengthAdjust="spacingAndGlyphs">14</text><text x="1776.76" y="1143.4" font-size="19.5" fill="#242424" textLength="19.95" lengthAdjust="spacingAndGlyphs">21</text><text x="1943.06" y="1143.4" font-size="19.5" fill="#242424" textLength="19.95" lengthAdjust="spacingAndGlyphs">21</text><text x="2109.36" y="1143.4" font-size="19.5" fill="#242424" textLength="19.95" lengthAdjust="spacingAndGlyphs">21</text><text x="2275.66" y="1143.4" font-size="19.5" fill="#242424" textLength="19.95" lengthAdjust="spacingAndGlyphs">22</text><text x="2441.50" y="1143.4" font-size="19.5" fill="#242424" textLength="19.95" lengthAdjust="spacingAndGlyphs">16</text><text x="2607.80" y="1143.4" font-size="19.5" fill="#242424" textLength="19.95" lengthAdjust="spacingAndGlyphs">16</text><text x="219.99" y="1193.3" font-size="19.5" fill="#242424" textLength="169.68" lengthAdjust="spacingAndGlyphs">Project Coordinator</text><text x="528.50" y="1193.3" font-size="19.5" fill="#242424" textLength="101.78" lengthAdjust="spacingAndGlyphs">Allen Harris</text><text x="835.70" y="1193.3" font-size="19.5" fill="#242424" textLength="95.21" lengthAdjust="spacingAndGlyphs">Committed</text><text x="1110.64" y="1193.3" font-size="19.5" fill="#242424" textLength="19.95" lengthAdjust="spacingAndGlyphs">14</text><text x="1277.86" y="1193.3" font-size="19.5" fill="#242424" textLength="19.95" lengthAdjust="spacingAndGlyphs">21</text><text x="1443.24" y="1193.3" font-size="19.5" fill="#242424" textLength="19.95" lengthAdjust="spacingAndGlyphs">14</text><text x="1609.54" y="1193.3" font-size="19.5" fill="#242424" textLength="19.95" lengthAdjust="spacingAndGlyphs">14</text><text x="1776.30" y="1193.3" font-size="19.5" fill="#242424" textLength="19.95" lengthAdjust="spacingAndGlyphs">17</text><text x="1942.60" y="1193.3" font-size="19.5" fill="#242424" textLength="19.95" lengthAdjust="spacingAndGlyphs">17</text><text x="2108.90" y="1193.3" font-size="19.5" fill="#242424" textLength="19.95" lengthAdjust="spacingAndGlyphs">16</text><text x="2274.74" y="1193.3" font-size="19.5" fill="#242424" textLength="19.95" lengthAdjust="spacingAndGlyphs">15</text><text x="2441.50" y="1193.3" font-size="19.5" fill="#242424" textLength="19.95" lengthAdjust="spacingAndGlyphs">16</text><text x="2607.80" y="1193.3" font-size="19.5" fill="#242424" textLength="19.95" lengthAdjust="spacingAndGlyphs">16</text><text x="221.00" y="1243.2" font-size="19.5" fill="#242424" textLength="152.19" lengthAdjust="spacingAndGlyphs">Change Manager</text><text x="528.50" y="1243.2" font-size="19.5" fill="#242424" textLength="125.91" lengthAdjust="spacingAndGlyphs">Ann Middleton</text><text x="835.70" y="1243.2" font-size="19.5" fill="#242424" textLength="95.21" lengthAdjust="spacingAndGlyphs">Committed</text><text x="1110.64" y="1243.2" font-size="19.5" fill="#242424" textLength="19.95" lengthAdjust="spacingAndGlyphs">14</text><text x="1276.94" y="1243.2" font-size="19.5" fill="#242424" textLength="19.95" lengthAdjust="spacingAndGlyphs">14</text><text x="1443.24" y="1243.2" font-size="19.5" fill="#242424" textLength="19.95" lengthAdjust="spacingAndGlyphs">14</text><text x="1609.54" y="1243.2" font-size="19.5" fill="#242424" textLength="19.95" lengthAdjust="spacingAndGlyphs">14</text><text x="1776.30" y="1243.2" font-size="19.5" fill="#242424" textLength="19.95" lengthAdjust="spacingAndGlyphs">16</text><text x="1942.60" y="1243.2" font-size="19.5" fill="#242424" textLength="19.95" lengthAdjust="spacingAndGlyphs">16</text><text x="2108.44" y="1243.2" font-size="19.5" fill="#242424" textLength="19.95" lengthAdjust="spacingAndGlyphs">15</text><text x="2275.66" y="1243.2" font-size="19.5" fill="#242424" textLength="19.95" lengthAdjust="spacingAndGlyphs">22</text><text x="2441.50" y="1243.2" font-size="19.5" fill="#242424" textLength="19.95" lengthAdjust="spacingAndGlyphs">16</text><text x="2607.80" y="1243.2" font-size="19.5" fill="#242424" textLength="19.95" lengthAdjust="spacingAndGlyphs">16</text><text x="221.00" y="1293.1" font-size="19.5" fill="#242424" textLength="62.40" lengthAdjust="spacingAndGlyphs">Auditor</text><text x="527.49" y="1293.1" font-size="19.5" fill="#242424" textLength="114.94" lengthAdjust="spacingAndGlyphs">Norah Pierce</text><text x="835.70" y="1293.1" font-size="19.5" fill="#242424" textLength="95.21" lengthAdjust="spacingAndGlyphs">Committed</text><text x="1110.64" y="1293.1" font-size="19.5" fill="#242424" textLength="19.95" lengthAdjust="spacingAndGlyphs">14</text><text x="1276.94" y="1293.1" font-size="19.5" fill="#242424" textLength="19.95" lengthAdjust="spacingAndGlyphs">14</text><text x="1443.24" y="1293.1" font-size="19.5" fill="#242424" textLength="19.95" lengthAdjust="spacingAndGlyphs">14</text><text x="1609.54" y="1293.1" font-size="19.5" fill="#242424" textLength="19.95" lengthAdjust="spacingAndGlyphs">14</text><text x="1775.84" y="1293.1" font-size="19.5" fill="#242424" textLength="19.95" lengthAdjust="spacingAndGlyphs">15</text><text x="1942.14" y="1293.1" font-size="19.5" fill="#242424" textLength="19.95" lengthAdjust="spacingAndGlyphs">15</text><text x="2108.44" y="1293.1" font-size="19.5" fill="#242424" textLength="19.95" lengthAdjust="spacingAndGlyphs">15</text><text x="2275.66" y="1293.1" font-size="19.5" fill="#242424" textLength="19.95" lengthAdjust="spacingAndGlyphs">22</text><text x="2441.50" y="1293.1" font-size="19.5" fill="#242424" textLength="19.95" lengthAdjust="spacingAndGlyphs">16</text><text x="2607.80" y="1293.1" font-size="19.5" fill="#242424" textLength="19.95" lengthAdjust="spacingAndGlyphs">16</text><text x="219.99" y="1343.0" font-size="19.5" fill="#242424" textLength="149.97" lengthAdjust="spacingAndGlyphs">Business Analyst</text><text x="528.50" y="1343.0" font-size="19.5" fill="#242424" textLength="72.25" lengthAdjust="spacingAndGlyphs">Jon Cox</text><text x="834.69" y="1343.0" font-size="19.5" fill="#242424" textLength="76.65" lengthAdjust="spacingAndGlyphs">Planning</text><text x="1110.64" y="1343.0" font-size="19.5" fill="#242424" textLength="19.95" lengthAdjust="spacingAndGlyphs">14</text><text x="1276.94" y="1343.0" font-size="19.5" fill="#242424" textLength="19.95" lengthAdjust="spacingAndGlyphs">14</text><text x="1443.24" y="1343.0" font-size="19.5" fill="#242424" textLength="19.95" lengthAdjust="spacingAndGlyphs">14</text><text x="1609.54" y="1343.0" font-size="19.5" fill="#242424" textLength="19.95" lengthAdjust="spacingAndGlyphs">14</text><text x="1775.84" y="1343.0" font-size="19.5" fill="#242424" textLength="19.95" lengthAdjust="spacingAndGlyphs">15</text><text x="1942.14" y="1343.0" font-size="19.5" fill="#242424" textLength="19.95" lengthAdjust="spacingAndGlyphs">15</text><text x="2108.44" y="1343.0" font-size="19.5" fill="#242424" textLength="19.95" lengthAdjust="spacingAndGlyphs">15</text><text x="2275.66" y="1343.0" font-size="19.5" fill="#242424" textLength="19.95" lengthAdjust="spacingAndGlyphs">21</text><text x="2441.50" y="1343.0" font-size="19.5" fill="#242424" textLength="19.95" lengthAdjust="spacingAndGlyphs">16</text><text x="2607.80" y="1343.0" font-size="19.5" fill="#242424" textLength="19.95" lengthAdjust="spacingAndGlyphs">16</text>
</svg>
</div></body></html>
